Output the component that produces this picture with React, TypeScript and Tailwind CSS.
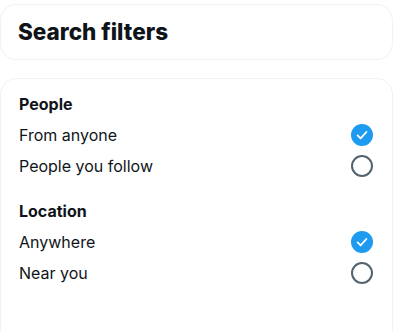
import React from "react";

function Check({ on }: { on: boolean }) {
  return on ? (
    <svg width="22" height="22" viewBox="0 0 22 22">
      <circle cx="11" cy="11" r="11" fill="#1d9bf0" />
      <path d="M6.6 11.4l3 3 5.8-6.4" fill="none" stroke="#fff" strokeWidth="1.8" strokeLinecap="round" strokeLinejoin="round" />
    </svg>
  ) : (
    <svg width="22" height="22" viewBox="0 0 22 22">
      <circle cx="11" cy="11" r="10" fill="none" stroke="#536471" strokeWidth="2" />
    </svg>
  );
}

function Row({ label, on }: { label: string; on: boolean }) {
  return (
    <div className="flex items-center justify-between h-[31px] pl-[18px] pr-[19px]">
      <span className="text-[16px] text-[#0f1419]">{label}</span>
      <Check on={on} />
    </div>
  );
}

export default function App() {
  return (
    <div
      className="w-[393px] h-[331px] overflow-hidden bg-white"
      style={{ fontFamily: "Inter, 'Noto Sans', sans-serif" }}
    >
      <div className="pt-[4px] w-[393px]">
        <div className="w-[393px] h-[56px] border border-[#eff3f4] rounded-[16px] flex items-center pl-[17px]">
          <h2 className="text-[22.5px] font-extrabold text-[#0f1419]">Search filters</h2>
        </div>
        <div className="mt-[18px] w-[393px] h-[300px] border border-[#eff3f4] rounded-[16px] pt-[13px]">
          <div className="pl-[18px] h-[24px] flex items-center text-[16px] font-bold text-[#0f1419]">People</div>
          <div className="mt-[3px]">
            <Row label="From anyone" on={true} />
            <Row label="People you follow" on={false} />
          </div>
          <div className="mt-[18px] pl-[18px] h-[24px] flex items-center text-[16px] font-bold text-[#0f1419]">Location</div>
          <div className="mt-[3px]">
            <Row label="Anywhere" on={true} />
            <Row label="Near you" on={false} />
          </div>
          <div className="mt-[40px] pl-[18px] text-[16px] leading-[20px] text-[#1d9bf0]">Advanced search</div>
        </div>
      </div>
    </div>
  );
}
